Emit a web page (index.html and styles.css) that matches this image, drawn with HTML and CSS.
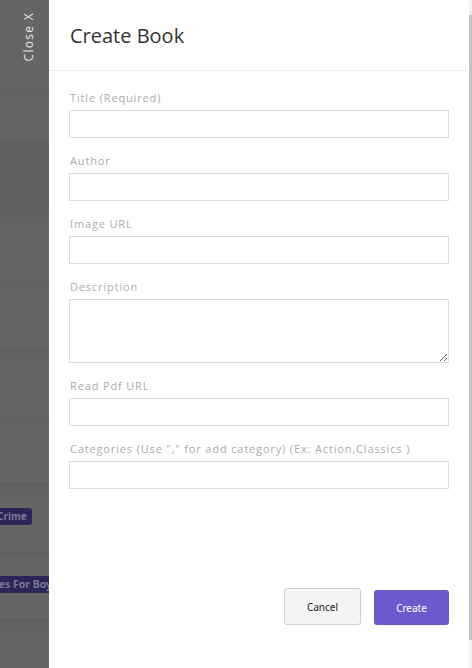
FILE: index.html
```html
<!DOCTYPE html>
<html lang="en">
<head>
<meta charset="utf-8">
<title>Create Book</title>
<link rel="stylesheet" href="styles.css">
</head>
<body>
<div class="backdrop">
  <div class="bg-rows">
    <div class="bg-row r90"></div>
    <div class="bg-row r52"></div>
    <div class="bg-row r71"></div>
    <div class="bg-row r69"></div>
    <div class="bg-row r67"></div>
    <div class="bg-row r69"></div>
    <div class="bg-row r66"></div>
    <div class="bg-row r69 tag-row"><span class="tag tag-crime">Crime</span></div>
    <div class="bg-row r67 tag-row"><span class="tag tag-boys">Stories For Boys</span></div>
    <div class="bg-row r69"></div>
  </div>
  <button class="close-btn" type="button">Close X</button>
</div>
<div class="drawer">
  <div class="drawer-header">
    <h1 class="drawer-title">Create Book</h1>
  </div>
  <form class="form">
    <div class="field">
      <label class="label">Title (Required)</label>
      <input class="input" type="text">
    </div>
    <div class="field">
      <label class="label">Author</label>
      <input class="input" type="text">
    </div>
    <div class="field">
      <label class="label">Image URL</label>
      <input class="input" type="text">
    </div>
    <div class="field">
      <label class="label">Description</label>
      <textarea class="input textarea"></textarea>
    </div>
    <div class="field">
      <label class="label">Read Pdf URL</label>
      <input class="input" type="text">
    </div>
    <div class="field">
      <label class="label">Categories (Use "," for add category) (Ex: Action,Classics )</label>
      <input class="input" type="text">
    </div>
  </form>
  <div class="footer">
    <button class="btn btn-cancel" type="button">Cancel</button>
    <button class="btn btn-create" type="button">Create</button>
  </div>
</div>
<div class="scrollbar"><div class="scroll-thumb"></div></div>
</body>
</html>
```

FILE: styles.css
```css
html, body {
  margin: 0;
  padding: 0;
  height: 668px;
  overflow: hidden;
}
body {
  display: flex;
  font-family: "Open Sans", "Noto Sans", sans-serif;
  background: #fff;
}
.backdrop {
  position: relative;
  width: 49px;
  flex: 0 0 49px;
  background: #646464;
  overflow: hidden;
}
.bg-rows {
  display: flex;
  flex-direction: column;
}
.bg-row {
  box-sizing: border-box;
  border-bottom: 1px solid #5e5e5e;
  background: linear-gradient(#626262, #656565 30%, #656565);
  display: flex;
  align-items: flex-start;
}
.r90 { height: 90px; background: #656565; }
.r52 { height: 52px; }
.r71 { height: 71px; background: #606060; }
.r69 { height: 69px; }
.r67 { height: 67px; }
.r66 { height: 66px; }
.tag-row { padding-top: 24px; }
.r67.tag-row { padding-top: 23px; }
.tag {
  display: inline-block;
  white-space: nowrap;
  background: #2b2558;
  color: #7b7894;
  font-family: "Noto Sans", sans-serif;
  font-weight: 700;
  font-size: 10px;
  line-height: 17px;
  padding: 0 5px;
  border-radius: 3px;
}
.tag-crime { margin-left: -8px; }
.tag-boys { margin-left: -31px; font-size: 10.5px; }
.close-btn {
  position: absolute;
  left: 21px;
  top: 12px;
  writing-mode: vertical-rl;
  transform: rotate(180deg);
  background: none;
  border: 0;
  padding: 0;
  color: #e4e4e4;
  font-family: "Open Sans", sans-serif;
  font-size: 12px;
  letter-spacing: 1.3px;
  line-height: 16px;
}
.drawer {
  flex: 1;
  display: flex;
  flex-direction: column;
  background: #fff;
}
.drawer-header {
  height: 70px;
  border-bottom: 1px solid #eeeeee;
  display: flex;
  align-items: center;
  padding: 0 20px 0 21px;
}
.drawer-title {
  margin: 0;
  font-weight: 400;
  font-size: 20px;
  color: #333;
}
.form {
  flex: 1;
  padding: 18px 20px 0;
}
.field {
  margin-bottom: 14px;
}
.label {
  display: block;
  font-size: 11px;
  line-height: 17px;
  margin-bottom: 4px;
  color: #acacac;
  letter-spacing: 0.85px;
  padding-left: 1px;
}
.input {
  display: block;
  box-sizing: border-box;
  width: 100%;
  height: 28px;
  margin: 0;
  border: 1px solid #dcdcdc;
  border-radius: 0;
  background: #fff;
  outline: none;
}
.textarea {
  height: 64px;
  resize: vertical;
}
.footer {
  display: flex;
  justify-content: flex-end;
  align-items: flex-end;
  gap: 13px;
  padding: 0 20px 43px;
}
.btn {
  box-sizing: border-box;
  font-family: "Noto Sans", sans-serif;
  font-size: 10px;
  border-radius: 3px;
  padding: 0;
  cursor: pointer;
}
.btn-cancel {
  width: 77px;
  height: 37px;
  background: #f4f4f4;
  border: 1px solid #cfcfcf;
  color: #222;
}
.btn-create {
  width: 75px;
  height: 35px;
  background: #6a5acd;
  border: 0;
  color: #fff;
}
.scrollbar {
  flex: 0 0 3px;
  width: 3px;
  background: #f1f1f1;
}
.scroll-thumb {
  margin-top: 15px;
  height: 625px;
  background: #c4c4c4;
}
```
